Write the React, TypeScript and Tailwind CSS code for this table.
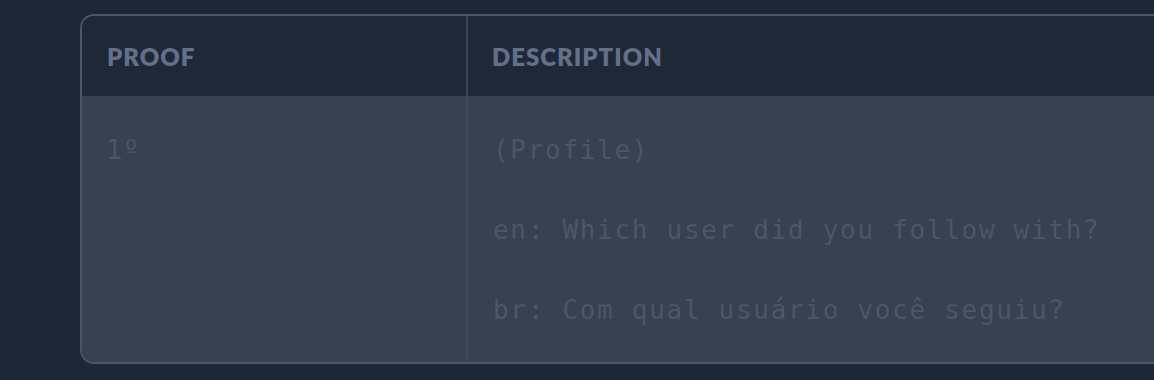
export default function App() {
  const lines = [
    "(Profile)",
    "en: Which user did you follow with?",
    "br: Com qual usuário você seguiu?",
  ];
  return (
    <div className="w-[1154px] h-[380px] overflow-hidden bg-[#1f2737] pt-[14px] pl-[80px]">
      <div className="w-[1200px] rounded-l-[14px] border-2 border-r-0 border-[#4a5567] overflow-hidden">
        <table className="w-full border-collapse">
          <thead>
            <tr className="bg-[#1f2839] h-[80px]">
              <th
                className="w-[385px] text-left align-middle pl-[25px] pt-[1px] text-[24px] font-extrabold tracking-[1px] text-[#637088] border-r-2 border-[#3b4557]"
                style={{ fontFamily: "Lato, 'Open Sans', sans-serif" }}
              >
                PROOF
              </th>
              <th
                className="text-left align-middle pl-[24px] pt-[1px] text-[24px] font-extrabold tracking-[1px] text-[#637088]"
                style={{ fontFamily: "Lato, 'Open Sans', sans-serif" }}
              >
                DESCRIPTION
              </th>
            </tr>
          </thead>
          <tbody>
            <tr className="bg-[#374151]">
              <td
                className="align-top pl-[24px] pt-[26px] pb-[24px] border-r-2 border-[#3f495b] text-[26px] leading-[56px] tracking-[1.7px] text-[#4c5667]"
                style={{ fontFamily: "'DejaVu Sans Mono', monospace" }}
              >
                1º
              </td>
              <td
                className="align-top pl-[25px] pt-[26px] pb-[24px] text-[26px] leading-[56px] tracking-[1.7px] text-[#4c5667]"
                style={{ fontFamily: "'DejaVu Sans Mono', monospace" }}
              >
                <div className="flex flex-col gap-[24px]">
                  {lines.map((l) => (
                    <div key={l} className="whitespace-pre">
                      {l}
                    </div>
                  ))}
                </div>
              </td>
            </tr>
          </tbody>
        </table>
      </div>
    </div>
  );
}
